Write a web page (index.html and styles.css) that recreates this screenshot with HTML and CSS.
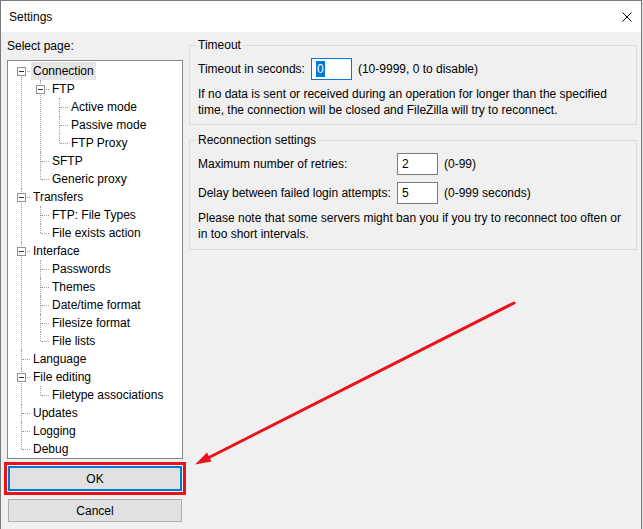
FILE: index.html
```html
<!DOCTYPE html>
<html lang="en">
<head>
    <meta charset="UTF-8">
    <meta name="viewport" content="width=device-width, initial-scale=1.0">
    <title>Settings</title>
    <link rel="stylesheet" href="styles.css">
</head>
<body>
    <div class="window">
        <div class="titlebar">
            <span class="title">Settings</span>
            <svg class="close" width="10" height="10" viewBox="0 0 10 10">
                <path d="M0.5 0.5 L9.5 9.5 M9.5 0.5 L0.5 9.5" stroke="#000" stroke-width="1" fill="none"/>
            </svg>
        </div>
        <div class="content">
            <div class="sidebar">
                <div class="caption">Select page:</div>
                <div class="tree">
                    <ul>
                        <li>
                            <div class="node"><span class="expander"></span><span class="label selected">Connection</span></div>
                            <ul>
                                <li>
                                    <div class="node"><span class="expander"></span><span class="label">FTP</span></div>
                                    <ul>
                                        <li><div class="node"><span class="label">Active mode</span></div></li>
                                        <li><div class="node"><span class="label">Passive mode</span></div></li>
                                        <li><div class="node"><span class="label">FTP Proxy</span></div></li>
                                    </ul>
                                </li>
                                <li><div class="node"><span class="label">SFTP</span></div></li>
                                <li><div class="node"><span class="label">Generic proxy</span></div></li>
                            </ul>
                        </li>
                        <li>
                            <div class="node"><span class="expander"></span><span class="label">Transfers</span></div>
                            <ul>
                                <li><div class="node"><span class="label">FTP: File Types</span></div></li>
                                <li><div class="node"><span class="label">File exists action</span></div></li>
                            </ul>
                        </li>
                        <li>
                            <div class="node"><span class="expander"></span><span class="label">Interface</span></div>
                            <ul>
                                <li><div class="node"><span class="label">Passwords</span></div></li>
                                <li><div class="node"><span class="label">Themes</span></div></li>
                                <li><div class="node"><span class="label">Date/time format</span></div></li>
                                <li><div class="node"><span class="label">Filesize format</span></div></li>
                                <li><div class="node"><span class="label">File lists</span></div></li>
                            </ul>
                        </li>
                        <li><div class="node"><span class="label">Language</span></div></li>
                        <li>
                            <div class="node"><span class="expander"></span><span class="label">File editing</span></div>
                            <ul>
                                <li><div class="node"><span class="label">Filetype associations</span></div></li>
                            </ul>
                        </li>
                        <li><div class="node"><span class="label">Updates</span></div></li>
                        <li><div class="node"><span class="label">Logging</span></div></li>
                        <li><div class="node"><span class="label">Debug</span></div></li>
                    </ul>
                </div>
                <button class="btn btn-default" type="button">OK</button>
                <button class="btn btn-cancel" type="button">Cancel</button>
            </div>

            <div class="panel">
                <fieldset class="group">
                    <legend>Timeout</legend>
                    <div class="row">
                        <span>Timeout in seconds:</span>
                        <div class="field focused"><span class="sel">0</span></div>
                        <span>(10-9999, 0 to disable)</span>
                    </div>
                    <p class="note">If no data is sent or received during an operation for longer than the specified<br>time, the connection will be closed and FileZilla will try to reconnect.</p>
                </fieldset>

                <fieldset class="group group-reconnect">
                    <legend>Reconnection settings</legend>
                    <div class="row">
                        <span class="row-label">Maximum number of retries:</span>
                        <div class="field">2</div>
                        <span>(0-99)</span>
                    </div>
                    <div class="row">
                        <span class="row-label">Delay between failed login attempts:</span>
                        <div class="field">5</div>
                        <span>(0-999 seconds)</span>
                    </div>
                    <p class="note">Please note that some servers might ban you if you try to reconnect too often or<br>in too short intervals.</p>
                </fieldset>
            </div>
        </div>
    </div>

    <svg class="annotation" width="643" height="529" viewBox="0 0 643 529">
        <line x1="514" y1="303" x2="206" y2="459" stroke="#e8131b" stroke-width="3" stroke-linecap="round"/>
        <polygon points="195,464.5 207,452.5 211.5,461.5" fill="#e8131b"/>
    </svg>
</body>
</html>
```

FILE: styles.css
```css
html {
    background: #e4e4e4;
}
body {
    margin: 0;
    padding: 0;
    overflow: hidden;
    font-family: "Liberation Sans", Arial, sans-serif;
    font-size: 12px;
    color: #000;
}
.window {
    width: 642px;
    height: 540px;
    box-sizing: border-box;
    border: 1px solid #7a7a7a;
    border-bottom: none;
    background: #f0f0f0;
}
.titlebar {
    height: 31px;
    background: #fff;
    display: flex;
    align-items: center;
    justify-content: space-between;
    padding: 0 9px 0 8px;
}
.close {
    display: block;
}

.content {
    display: flex;
    gap: 6px;
    padding: 5px 4px 0 6px;
}
.sidebar {
    width: 176px;
    flex-shrink: 0;
}
.caption {
    line-height: 16px;
    margin: 1px 0 6px 0;
}

/* tree view */
.tree {
    height: 399px;
    box-sizing: border-box;
    border: 1px solid #828790;
    background: #fff;
    padding: 1px 0;
    overflow: hidden;
}
.tree ul {
    list-style: none;
    margin: 0;
    padding: 0;
}
.tree ul ul {
    margin-left: 19px;
}
.tree li {
    position: relative;
}
.tree li::before {
    content: "";
    position: absolute;
    left: 13px;
    top: 0;
    bottom: 0;
    border-left: 1px dotted #a0a0a0;
}
.tree li:last-child::before {
    bottom: auto;
    height: 9px;
}
.tree > ul > li:first-child::before {
    top: 9px;
}
.node {
    position: relative;
    height: 18px;
    display: flex;
    align-items: center;
    padding-left: 23px;
}
.node::before {
    content: "";
    position: absolute;
    left: 14px;
    top: 9px;
    width: 8px;
    border-top: 1px dotted #a0a0a0;
}
.label {
    padding: 0 2px;
    line-height: 18px;
    white-space: nowrap;
}
.label.selected {
    background: #e5e5e5;
}
.expander {
    position: absolute;
    left: 9px;
    top: 5px;
    width: 9px;
    height: 9px;
    box-sizing: border-box;
    border: 1px solid #919191;
    background: #fff;
    z-index: 1;
}
.expander::after {
    content: "";
    position: absolute;
    left: 1px;
    top: 3px;
    width: 5px;
    height: 1px;
    background: #333;
}

/* buttons */
.btn {
    display: block;
    width: 174px;
    height: 23px;
    margin: 7px 1px 0 1px;
    box-sizing: border-box;
    border: 1px solid #adadad;
    background: #e1e1e1;
    font-family: inherit;
    font-size: 12px;
    color: #000;
    padding: 0;
}
.btn-default {
    height: 25px;
    border: 2px solid #0078d7;
    outline: 3px solid #e8131b;
    outline-offset: 1px;
}
.btn-cancel {
    margin-top: 8px;
}

/* right side */
.panel {
    flex: 1;
    min-width: 0;
}
.group {
    margin: 0;
    padding: 5px 8px 6px 8px;
    border: 1px solid #dcdcdc;
    min-width: 0;
}
.group legend {
    padding: 0 2px;
    margin-left: -2px;
    line-height: 16px;
}
.group-reconnect {
    margin-top: 7px;
    padding-bottom: 7px;
}
.row {
    display: flex;
    align-items: center;
    gap: 6px;
    height: 22px;
}
.row + .row {
    margin-top: 7px;
}
.row-label {
    width: 193px;
}
.field {
    width: 41px;
    height: 22px;
    box-sizing: border-box;
    border: 1px solid #7a7a7a;
    background: #fff;
    padding: 0 4px;
    line-height: 20px;
}
.field.focused {
    border-color: #0078d7;
}
.sel {
    display: inline-block;
    background: #0078d7;
    color: #fff;
    line-height: 16px;
    padding: 0 1px;
}
.note {
    margin: 6px 0 0 0;
    line-height: 16px;
}

.annotation {
    position: absolute;
    top: 0;
    left: 0;
    pointer-events: none;
}
```
